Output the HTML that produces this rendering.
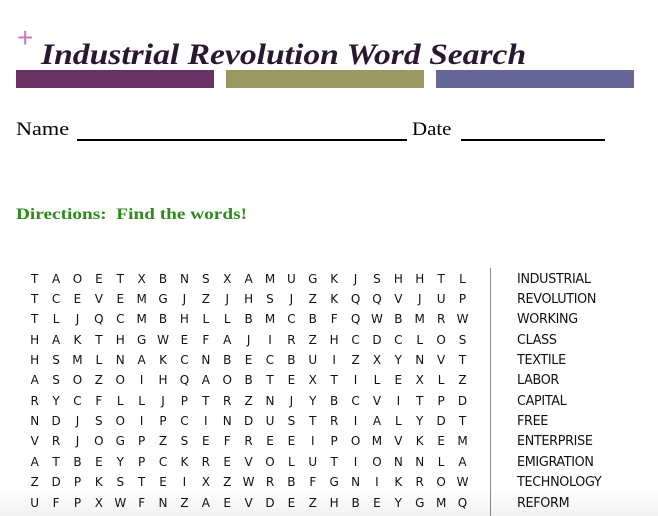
<!DOCTYPE html>
<html><head><meta charset="utf-8"><style>
body{margin:0;width:658px;height:516px;background:#fff;position:relative;overflow:hidden;font-family:"Liberation Serif",serif}
.a{position:absolute}
.bar{position:absolute;top:70px;height:18px;width:198px}
.row{position:absolute;left:24px;height:20px;display:flex;font-family:"DejaVu Sans",sans-serif;font-size:12px;color:#111;line-height:20px}
.row span{width:21.4px;text-align:center}
.w{position:absolute;left:517px;font-family:"DejaVu Sans Condensed","DejaVu Sans",sans-serif;font-size:13.5px;color:#111;line-height:20px;letter-spacing:-0.3px;transform:scaleX(1.05);transform-origin:left}
.ln{position:absolute;top:139px;height:2px;background:#000}
</style></head><body>
<div class="a" style="left:17px;top:24px;color:#c27bc0;font-family:'Liberation Sans',sans-serif;font-size:28px;line-height:28px">+</div>
<div class="a" style="left:41px;top:38px;font-size:30px;font-weight:bold;font-style:italic;color:#2a1830;line-height:34px;transform:scaleX(1.12);transform-origin:left;white-space:nowrap">Industrial Revolution Word Search</div>
<div class="bar" style="left:16px;background:#683262"></div>
<div class="bar" style="left:226px;background:#9a9862"></div>
<div class="bar" style="left:436px;background:#666699"></div>
<div class="a" style="left:16px;top:118px;font-size:19px;line-height:24px;color:#000;transform:scaleX(1.17);transform-origin:left">Name</div>
<div class="ln" style="left:77px;width:330px"></div>
<div class="a" style="left:412px;top:118px;font-size:19px;line-height:24px;color:#000;transform:scaleX(1.1);transform-origin:left">Date</div>
<div class="ln" style="left:461px;width:144px"></div>
<div class="a" style="left:16px;top:204px;font-size:16px;font-weight:bold;color:#2e8b1e;line-height:22px;transform:scaleX(1.205);transform-origin:left;white-space:nowrap">Directions:&nbsp; Find the words!</div>
<div class="a" style="left:490px;top:268px;width:1px;height:248px;background:#888"></div>
<div class="row" style="top:269px"><span>T</span><span>A</span><span>O</span><span>E</span><span>T</span><span>X</span><span>B</span><span>N</span><span>S</span><span>X</span><span>A</span><span>M</span><span>U</span><span>G</span><span>K</span><span>J</span><span>S</span><span>H</span><span>H</span><span>T</span><span>L</span></div>
<div class="row" style="top:289px"><span>T</span><span>C</span><span>E</span><span>V</span><span>E</span><span>M</span><span>G</span><span>J</span><span>Z</span><span>J</span><span>H</span><span>S</span><span>J</span><span>Z</span><span>K</span><span>Q</span><span>Q</span><span>V</span><span>J</span><span>U</span><span>P</span></div>
<div class="row" style="top:309px"><span>T</span><span>L</span><span>J</span><span>Q</span><span>C</span><span>M</span><span>B</span><span>H</span><span>L</span><span>L</span><span>B</span><span>M</span><span>C</span><span>B</span><span>F</span><span>Q</span><span>W</span><span>B</span><span>M</span><span>R</span><span>W</span></div>
<div class="row" style="top:330px"><span>H</span><span>A</span><span>K</span><span>T</span><span>H</span><span>G</span><span>W</span><span>E</span><span>F</span><span>A</span><span>J</span><span>I</span><span>R</span><span>Z</span><span>H</span><span>C</span><span>D</span><span>C</span><span>L</span><span>O</span><span>S</span></div>
<div class="row" style="top:350px"><span>H</span><span>S</span><span>M</span><span>L</span><span>N</span><span>A</span><span>K</span><span>C</span><span>N</span><span>B</span><span>E</span><span>C</span><span>B</span><span>U</span><span>I</span><span>Z</span><span>X</span><span>Y</span><span>N</span><span>V</span><span>T</span></div>
<div class="row" style="top:370px"><span>A</span><span>S</span><span>O</span><span>Z</span><span>O</span><span>I</span><span>H</span><span>Q</span><span>A</span><span>O</span><span>B</span><span>T</span><span>E</span><span>X</span><span>T</span><span>I</span><span>L</span><span>E</span><span>X</span><span>L</span><span>Z</span></div>
<div class="row" style="top:391px"><span>R</span><span>Y</span><span>C</span><span>F</span><span>L</span><span>L</span><span>J</span><span>P</span><span>T</span><span>R</span><span>Z</span><span>N</span><span>J</span><span>Y</span><span>B</span><span>C</span><span>V</span><span>I</span><span>T</span><span>P</span><span>D</span></div>
<div class="row" style="top:411px"><span>N</span><span>D</span><span>J</span><span>S</span><span>O</span><span>I</span><span>P</span><span>C</span><span>I</span><span>N</span><span>D</span><span>U</span><span>S</span><span>T</span><span>R</span><span>I</span><span>A</span><span>L</span><span>Y</span><span>D</span><span>T</span></div>
<div class="row" style="top:431px"><span>V</span><span>R</span><span>J</span><span>O</span><span>G</span><span>P</span><span>Z</span><span>S</span><span>E</span><span>F</span><span>R</span><span>E</span><span>E</span><span>I</span><span>P</span><span>O</span><span>M</span><span>V</span><span>K</span><span>E</span><span>M</span></div>
<div class="row" style="top:452px"><span>A</span><span>T</span><span>B</span><span>E</span><span>Y</span><span>P</span><span>C</span><span>K</span><span>R</span><span>E</span><span>V</span><span>O</span><span>L</span><span>U</span><span>T</span><span>I</span><span>O</span><span>N</span><span>N</span><span>L</span><span>A</span></div>
<div class="row" style="top:472px"><span>Z</span><span>D</span><span>P</span><span>K</span><span>S</span><span>T</span><span>E</span><span>I</span><span>X</span><span>Z</span><span>W</span><span>R</span><span>B</span><span>F</span><span>G</span><span>N</span><span>I</span><span>K</span><span>R</span><span>O</span><span>W</span></div>
<div class="row" style="top:493px"><span>U</span><span>F</span><span>P</span><span>X</span><span>W</span><span>F</span><span>N</span><span>Z</span><span>A</span><span>E</span><span>V</span><span>D</span><span>E</span><span>Z</span><span>H</span><span>B</span><span>E</span><span>Y</span><span>G</span><span>M</span><span>Q</span></div>
<div class="w" style="top:269px">INDUSTRIAL</div>
<div class="w" style="top:289px">REVOLUTION</div>
<div class="w" style="top:309px">WORKING</div>
<div class="w" style="top:330px">CLASS</div>
<div class="w" style="top:350px">TEXTILE</div>
<div class="w" style="top:370px">LABOR</div>
<div class="w" style="top:391px">CAPITAL</div>
<div class="w" style="top:411px">FREE</div>
<div class="w" style="top:431px">ENTERPRISE</div>
<div class="w" style="top:452px">EMIGRATION</div>
<div class="w" style="top:472px">TECHNOLOGY</div>
<div class="w" style="top:493px">REFORM</div>
<div class="a" style="left:0;top:488px;width:658px;height:28px;background:linear-gradient(#fff0,#0000000d)"></div>
</body></html>
